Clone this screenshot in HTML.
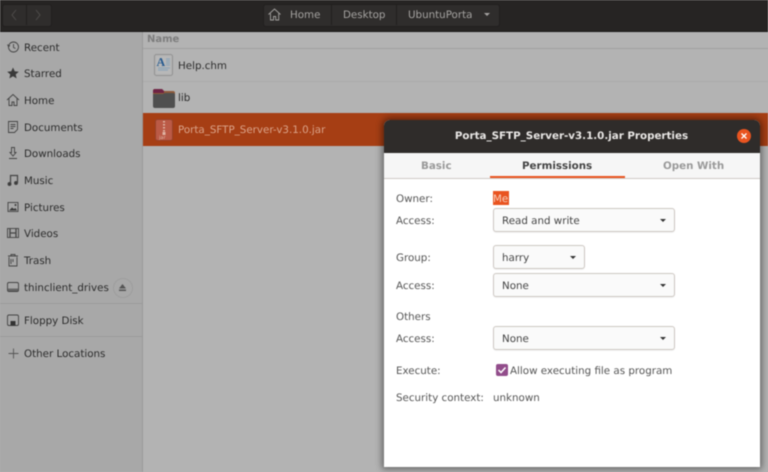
<!DOCTYPE html>
<html><head><meta charset="utf-8">
<style>
html,body{margin:0;padding:0;width:768px;height:472px;overflow:hidden;background:#b3b3b3}
body{font-family:"DejaVu Sans","Liberation Sans",sans-serif;font-size:11px;position:relative;text-rendering:geometricPrecision}
.a{position:absolute;white-space:nowrap}
#base{position:absolute;left:0;top:0;width:768px;height:472px;filter:blur(.5px)}
.s{position:absolute;left:24px;color:#2c2c2c;font-size:10.3px;line-height:14px;white-space:nowrap;margin-top:1px}
.i{position:absolute;left:6px;width:14px;height:14px;overflow:visible;fill:none;stroke:#444;stroke-width:.9}
.l{position:absolute;left:396px;color:#555;font-size:10.3px;line-height:14px;white-space:nowrap;margin-top:1px}
.d{position:absolute;left:493px;width:180px;height:22px;background:#fafafa;border:1px solid #cdc7c2;border-radius:3px;color:#444;font-size:10.3px;line-height:24px;text-indent:8px;box-shadow:0 1px 1px rgba(0,0,0,.05)}
.d:after{content:"";position:absolute;right:8px;top:10px;border:3.5px solid transparent;border-top:3.5px solid #333;border-bottom:0}
</style></head><body>
<div id="base">
<!-- header -->
<div class="a" style="left:0;top:0;width:768px;height:31px;background:#262423;border-bottom:1px solid #191817"></div>
<div class="a" style="left:2px;top:4px;width:48px;height:21px;background:#2f2d2c;border:1px solid #211f1e;border-radius:3px"></div>
<div class="a" style="left:26px;top:4px;width:1px;height:21px;background:#211f1e"></div>
<svg class="a" style="left:0;top:0" width="60" height="30" fill="none" stroke="#4e4c4a" stroke-width="1"><path d="M16 10l-4 5 4 5M36 10l4 5-4 5"/></svg>
<div class="a" style="left:263px;top:4px;width:235px;height:21px;background:#2f2d2c;border:1px solid #211f1e;border-radius:3px"></div>
<div class="a" style="left:331px;top:4px;width:1px;height:21px;background:#211f1e"></div>
<div class="a" style="left:396px;top:4px;width:1px;height:21px;background:#211f1e"></div>
<svg class="a" style="left:268px;top:8px" width="13" height="13" fill="none" stroke="#a5a3a1" stroke-width=".9"><path d="M.5 6.500L6.500 1l6 5.500M2.500 5.500v6.500h3V8.500h2.200V12h3V5.500"/></svg>
<div class="a" style="left:290px;top:8px;color:#a5a3a1;font-size:10.3px;line-height:14px">Home</div>
<div class="a" style="left:343px;top:8px;color:#a5a3a1;font-size:10.3px;line-height:14px">Desktop</div>
<div class="a" style="left:408px;top:8px;color:#a5a3a1;font-size:10.3px;line-height:14px">UbuntuPorta</div>
<div class="a" style="left:484px;top:13px;border:3.5px solid transparent;border-top:3.5px solid #a5a3a1;border-bottom:0"></div>

<!-- sidebar -->
<div class="a" style="left:0;top:32px;width:142px;height:440px;background:#a8a8a8;border-right:1px solid #999"></div>
<svg class="i" style="top:40px" viewBox="0 0 14 14"><circle cx="7.500" cy="7" r="5"/><path d="M7.500 4v3.500l2 1M1.500 4.500l1 2 1.500-1"/></svg>
<div class="s" style="top:39.500px">Recent</div>
<svg class="i" style="top:66px" viewBox="0 0 14 14"><path fill="#3a3a3a" stroke="none" d="M7 1.500l1.700 3.800 4.100.4-3.100 2.700.9 4L7 10.300l-3.600 2.100.9-4L1.200 5.700l4.100-.4z"/></svg>
<div class="s" style="top:66px">Starred</div>
<svg class="i" style="top:93px" viewBox="0 0 14 14"><path d="M1 7l6-5.500L13 7M3 5.500V12.500h3V9h2v3.500h3V5.500"/></svg>
<div class="s" style="top:93px">Home</div>
<svg class="i" style="top:120px" viewBox="0 0 14 14"><path d="M2.500 1.500h9v8l-3 3h-6zM4.500 4.500h5M4.500 6.500h5M4.500 8.500h3"/></svg>
<div class="s" style="top:120px">Documents</div>
<svg class="i" style="top:146px" viewBox="0 0 14 14"><path d="M5.500 1.500h3v5h1.500L7 10 4 6.500h1.500zM3 12.500h8"/></svg>
<div class="s" style="top:146px">Downloads</div>
<svg class="i" style="top:173px" viewBox="0 0 14 14"><path stroke-width="1.200" d="M4.500 11V2.500h7V10"/><circle cx="3.500" cy="11" r="1.500" fill="#3a3a3a"/><circle cx="10" cy="10" r="1.500" fill="#3a3a3a"/></svg>
<div class="s" style="top:173px">Music</div>
<svg class="i" style="top:200px" viewBox="0 0 14 14"><rect x="2" y="2.500" width="10" height="9"/><path fill="#3a3a3a" stroke="none" d="M3 10.500l3-3 2 1.500 1.500-1 1.500 2.500z"/><circle cx="9.500" cy="5" r="1" fill="#3a3a3a" stroke="none"/></svg>
<div class="s" style="top:200px">Pictures</div>
<svg class="i" style="top:226px" viewBox="0 0 14 14"><rect x="1.500" y="2.500" width="11" height="9"/><path stroke-width="1.300" d="M4 2.500v9M10 2.500v9M4 7h6"/></svg>
<div class="s" style="top:226px">Videos</div>
<svg class="i" style="top:253px" viewBox="0 0 14 14"><path d="M3 4v9h8V4M2 3h10M5 3V1.500h4V3M5 6v5M7 6v3"/></svg>
<div class="s" style="top:253px">Trash</div>
<svg class="i" style="top:280px" viewBox="0 0 14 14"><rect x="1.500" y="2.500" width="11" height="9" rx="1.500"/><path fill="#666" stroke="none" d="M2 8.500h10V11H2z"/></svg>
<div class="s" style="top:280px">thinclient_drives</div>
<div class="a" style="left:113px;top:278px;width:18px;height:18px;border:1px solid #9d9d9d;border-radius:50%"></div>
<svg class="a" style="left:118px;top:283px" width="9" height="9"><path fill="#555" d="M4.500 1L8 5.500H1zM1 6.500h7V8H1z"/></svg>
<div class="a" style="left:0;top:303px;width:142px;height:1px;background:#9b9b9b"></div>
<svg class="i" style="top:313px" viewBox="0 0 14 14"><rect x="1.500" y="2" width="11" height="10.500" rx="1.500"/><path fill="#333" stroke="none" d="M4.500 8h5v4.500h-5z"/></svg>
<div class="s" style="top:313px">Floppy Disk</div>
<div class="a" style="left:0;top:336px;width:142px;height:1px;background:#9b9b9b"></div>
<svg class="i" style="top:346px" viewBox="0 0 14 14"><path d="M7.500 2.500v10M2.500 7.500h10" stroke="#555"/></svg>
<div class="s" style="top:346px">Other Locations</div>

<!-- list -->
<div class="a" style="left:147px;top:33px;color:#7d7d7d;font-size:10px;font-weight:bold;line-height:14px">Name</div>
<div class="a" style="left:143px;top:48px;width:625px;height:1px;background:#a2a2a2"></div>
<div class="a" style="left:143px;top:81px;width:625px;height:1px;background:#ababab"></div>
<svg class="a" style="left:154px;top:54px" width="20" height="23"><rect x=".5" y=".5" width="18" height="21" rx="2" fill="#b4b4b4" stroke="#929292"/><rect x="2.500" y="2.500" width="14" height="17" fill="#b8b8b8"/><text x="2.500" y="12" font-family="Liberation Serif,serif" font-size="12" font-weight="bold" fill="#245a90">A</text><path d="M12 5h4M12 7h4M12 9h4M12 11h4M4 14h12M4 16h10" stroke="#90a6b8" stroke-width="1.200"/></svg>
<div class="a" style="left:178px;top:59px;color:#2c2c2c;font-size:10.3px;line-height:14px">Help.chm</div>
<svg class="a" style="left:152px;top:87px" width="24" height="22"><path d="M1 4a2 2 0 0 1 2-2h7l2 2h9a2 2 0 0 1 2 2v4H1z" fill="#8e5a3a"/><path d="M1 4a2 2 0 0 1 2-2h7l2 2v2H1z" fill="#6e2344"/><path d="M1 7h10l2-1h8a2 2 0 0 1 2 2v11a2 2 0 0 1-2 2H3a2 2 0 0 1-2-2z" fill="#4f4f4f"/></svg>
<div class="a" style="left:178px;top:91px;color:#2c2c2c;font-size:10.3px;line-height:14px">lib</div>
<div class="a" style="left:143px;top:113px;width:625px;height:33px;background:#a63e14"></div>
<svg class="a" style="left:155px;top:119px" width="18" height="22"><rect x=".5" y=".5" width="17" height="21" rx="2" fill="#bb5a46" stroke="#96422a"/><path d="M9 2v11" stroke="#dfb3a3" stroke-width="2" stroke-dasharray="1.500 1.500"/><rect x="7.500" y="13" width="3" height="3" fill="#dfb3a3"/><text x="4" y="20" font-family="DejaVu Sans" font-size="5" fill="#dcb2a2">jar</text></svg>
<div class="a" style="left:178px;top:123px;color:#dba48a;font-size:10.3px;line-height:14px">Porta_SFTP_Server-v3.1.0.jar</div>

<!-- dialog -->
<div class="a" style="left:384px;top:120px;width:376px;height:347px;background:#fff;border-radius:6px 6px 0 0;box-shadow:0 0 7px 2px rgba(0,0,0,.45)"></div>
<div class="a" style="left:384px;top:120px;width:376px;height:33px;background:#2f2c2a;border-radius:6px 6px 0 0"></div>
<div class="a" style="left:384px;top:129px;width:376px;text-align:center;color:#e9e7e5;font-size:10.3px;font-weight:bold;line-height:14px;text-indent:-1px">Porta_SFTP_Server-v3.1.0.jar Properties</div>
<div class="a" style="left:737px;top:129px;width:14px;height:14px;border-radius:50%;background:#e95420"></div>
<svg class="a" style="left:737px;top:129px" width="14" height="14"><path d="M4.500 4.500l5 5M9.500 4.500l-5 5" stroke="#fff" stroke-width="1.300"/></svg>
<div class="a" style="left:384px;top:153px;width:376px;height:25px;background:#f6f6f6;border-bottom:1px solid #cfcac6"></div>
<div class="a" style="left:490px;top:176px;width:135px;height:2px;background:#e95420"></div>
<div class="a" style="left:421px;top:159px;color:#999;font-size:10.3px;font-weight:bold;line-height:14px">Basic</div>
<div class="a" style="left:522px;top:159px;color:#444;font-size:10.3px;font-weight:bold;line-height:14px">Permissions</div>
<div class="a" style="left:663px;top:159px;color:#999;font-size:10.3px;font-weight:bold;line-height:14px">Open With</div>

<div class="l" style="top:191px">Owner:</div>
<div class="a" style="left:493px;top:191px;height:14px;background:#e95420;color:#f7d0bd;font-size:10.3px;line-height:16px;width:16px">Me</div>
<div class="l" style="top:213px">Access:</div>
<div class="d" style="top:208px">Read and write</div>
<div class="l" style="top:250px">Group:</div>
<div class="d" style="top:245px;width:90px">harry</div>
<div class="l" style="top:278px">Access:</div>
<div class="d" style="top:273px">None</div>
<div class="l" style="top:309px">Others</div>
<div class="l" style="top:331px">Access:</div>
<div class="d" style="top:326px">None</div>
<div class="l" style="top:363px">Execute:</div>
<div class="a" style="left:496px;top:364px;width:12px;height:12px;border-radius:2px;background:#924d8b"></div>
<svg class="a" style="left:496px;top:364px" width="12" height="12"><path d="M2.500 6l2.500 2.500 4.500-5" fill="none" stroke="#fff" stroke-width="1.500"/></svg>
<div class="l" style="left:510px;top:363px">Allow executing file as program</div>
<div class="l" style="top:390px">Security context:</div>
<div class="l" style="left:493px;top:390px">unknown</div>
</div>
</body></html>
